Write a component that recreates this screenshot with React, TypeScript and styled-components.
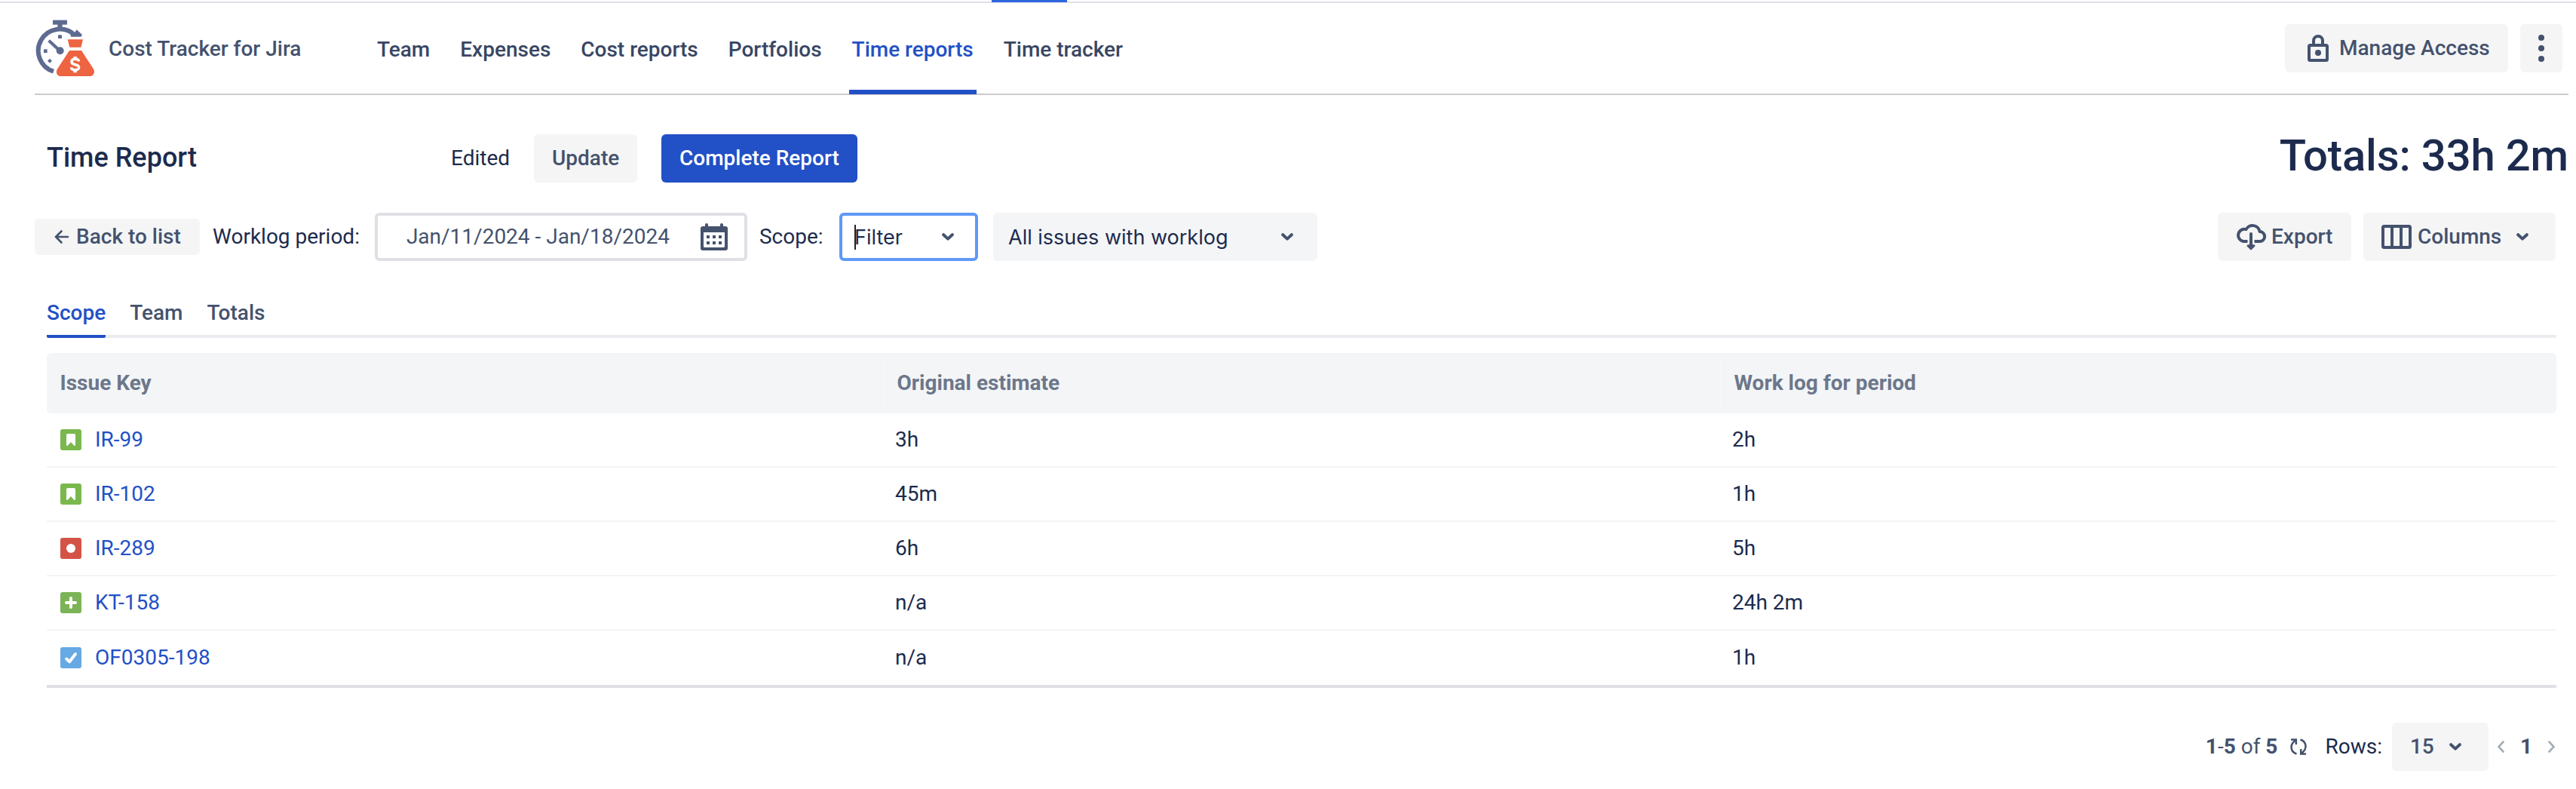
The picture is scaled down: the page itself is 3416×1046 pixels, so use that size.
import React from "react";
import styled, { createGlobalStyle, css } from "styled-components";

const color = {
  ink: "#1c2b4d",
  slate: "#44526d",
  navText: "#384663",
  muted: "#6c778b",
  blue: "#2250c6",
  buttonBg: "#f5f5f6",
  fieldBg: "#f4f5f7",
  line: "#ebecf0",
  border: "#dfe0e5",
};

const GlobalStyle = createGlobalStyle`
  *, *::before, *::after { box-sizing: border-box; }
  body { margin: 0; background: #fff; }
`;

const Page = styled.div`
  display: flex;
  flex-direction: column;
  width: 3416px;
  height: 1046px;
  overflow: hidden;
  background: #fff;
  color: ${color.ink};
  font-family: Roboto, "Liberation Sans", sans-serif;
  font-size: 28px;
  line-height: 40px;
  white-space: nowrap;
  svg { display: block; flex: none; }
`;

const HostBar = styled.div`
  height: 4px;
  flex: none;
  padding-left: 1315px;
  background: linear-gradient(#fff 0 2px, #dfe0e8 2px 4px);
`;

const HostTab = styled.div`
  width: 100px;
  height: 3px;
  background: #2e66e0;
`;

const Header = styled.header`
  display: flex;
  flex: none;
  height: 122px;
  margin: 0 10px 0 46px;
  padding-right: 8px;
  border-bottom: 2px solid #cbcbcc;
`;

const Brand = styled.div`
  display: flex;
  align-items: center;
  width: 450px;
  padding-top: 2px;
  color: ${color.slate};
  font-weight: 500;
  svg { margin: -4px 18px 0 0; }
`;

const Nav = styled.nav`
  display: flex;
  flex: 1;
  gap: 32px;
`;

const NavLink = styled.a<{ $active?: boolean }>`
  display: flex;
  align-items: center;
  height: 121px;
  padding: 9px 4px 0;
  border-bottom: 6px solid ${(p) => (p.$active ? color.blue : "transparent")};
  border-radius: 3px 3px 0 0;
  color: ${(p) => (p.$active ? color.blue : color.navText)};
  font-weight: 500;
`;

const HeaderActions = styled.div`
  display: flex;
  gap: 16px;
  padding-top: 28px;
`;

const Button = styled.button<{ $width: number; $primary?: boolean; $pad?: number; $short?: boolean }>`
  display: flex;
  flex: none;
  align-items: center;
  width: ${(p) => p.$width}px;
  height: ${(p) => (p.$short ? 48 : 64)}px;
  margin: 0;
  padding: 0 0 0 ${(p) => p.$pad ?? 24}px;
  border: 0;
  border-radius: 6px;
  background: ${(p) => (p.$primary ? color.blue : color.buttonBg)};
  color: ${(p) => (p.$primary ? "#fff" : color.slate)};
  font: inherit;
  font-weight: 500;
`;

const Label = styled.span<{ $left?: number; $right?: number }>`
  margin-left: ${(p) => p.$left ?? 0}px;
  margin-right: ${(p) => p.$right ?? 0}px;
`;

const TitleRow = styled.section`
  display: flex;
  flex: none;
  align-items: center;
  height: 64px;
  margin: 52px 10px 0 62px;
`;

const Title = styled.h1`
  width: 536px;
  margin: 0 0 2px;
  font-size: 36px;
  font-weight: 500;
`;

const Status = styled.span`
  width: 110px;
`;

const TitleActions = styled.div`
  display: flex;
  flex: 1;
  gap: 32px;
`;

const GrandTotal = styled.div`
  margin-bottom: 8px;
  font-size: 58px;
  line-height: 64px;
  font-weight: 500;
  letter-spacing: -0.15px;
`;

const Toolbar = styled.section`
  display: flex;
  flex: none;
  align-items: center;
  height: 64px;
  margin: 40px 27px 0 46px;
`;

const fieldBox = css`
  display: flex;
  align-items: center;
  height: 64px;
  border-radius: 6px;
`;

const DateField = styled.div`
  ${fieldBox}
  width: 494px;
  margin: 0 16px 0 20px;
  padding-left: 38px;
  border: 4px solid ${color.border};
  color: ${color.slate};
  svg { margin-left: 41px; }
`;

const Select = styled.div<{ $width: number; $focused?: boolean }>`
  ${fieldBox}
  justify-content: space-between;
  width: ${(p) => p.$width}px;
  margin-left: 20px;
  padding: 0 28px 0 16px;
  border: 4px solid ${(p) => (p.$focused ? "#5f99f7" : color.fieldBg)};
  background: ${(p) => (p.$focused ? "#fff" : color.fieldBg)};
  font-family: Inter, Roboto, sans-serif;
  font-size: 27px;
`;

const SelectValue = styled.span`
  display: flex;
  align-items: center;
  padding-top: 1px;
`;

const Caret = styled.i`
  width: 2px;
  height: 33px;
  margin-right: -2px;
  background: #222;
`;

const ToolbarEnd = styled.div`
  display: flex;
  gap: 16px;
  margin-left: auto;
`;

const Tabs = styled.div`
  display: flex;
  flex: none;
  gap: 32px;
  height: 48px;
  margin: 54px 26px 0 62px;
  border-bottom: 4px solid ${color.line};
`;

const Tab = styled.div<{ $active?: boolean }>`
  height: 48px;
  line-height: 29px;
  border-bottom: 4px solid ${(p) => (p.$active ? color.blue : "transparent")};
  border-radius: 2px;
  color: ${(p) => (p.$active ? color.blue : color.slate)};
  font-weight: 500;
`;

const Table = styled.div`
  flex: none;
  margin: 20px 26px 0 62px;
  border-bottom: 4px solid ${color.border};
`;

const gridRow = css`
  display: grid;
  grid-template-columns: 1110px 1110px 1fr;
  align-items: center;
`;

const HeadRow = styled.div`
  ${gridRow}
  height: 80px;
  border-radius: 6px;
  background: ${color.fieldBg};
  color: ${color.muted};
  font-weight: 700;
`;

const HeadCell = styled.div`
  padding-left: 17.5px;
  line-height: 80px;
  & + & { box-shadow: -1px 0 0 #f7f8fa; }
`;

const Row = styled.div`
  ${gridRow}
  height: 72px;
  border-bottom: 2px solid #f3f4f6;
  &:last-child { border-bottom: 0; }
`;

const Cell = styled.div`
  padding-left: 15px;
`;

const KeyCell = styled.div`
  display: flex;
  align-items: center;
  gap: 18px;
  padding-left: 18px;
  color: ${color.blue};
`;

const Pagination = styled.footer`
  display: flex;
  flex: none;
  align-items: center;
  justify-content: flex-end;
  height: 64px;
  margin: 46px 28px 0 0;
`;

const Range = styled.span`
  margin-right: 17px;
  color: ${color.slate};
  b { font-weight: 700; }
`;

const RowsLabel = styled.span`
  margin: 0 13px 0 24px;
`;

const PageNumber = styled.b`
  margin: 0 21px;
  color: ${color.slate};
  font-weight: 700;
`;

const Logo = () => (
  <svg width="80" height="78" viewBox="48 42 240 234">
    <g fill="#5d6b90">
      <rect x="120" y="50" width="57" height="18" />
      <rect x="139" y="66" width="19" height="18" />
      <rect x="141" y="109" width="15" height="14" />
      <rect x="84" y="166" width="14" height="14" />
      <path d="M108 203l9 9-9 9-9-9z" />
      <circle cx="149" cy="172" r="15" />
      <path d="M215 88l22 20-5 8h-40l-2-12h14z" />
    </g>
    <path d="M123 254A86 86 0 1 1 206 108" fill="none" stroke="#5d6b90" strokeWidth="18" />
    <path d="M104 131l44 41" stroke="#5d6b90" strokeWidth="12" />
    <g fill="#ee6340">
      <path d="M179 127h61l-8 31h-45z" />
      <path d="M186 171h48l47 72q7 11 2 20-5 10-17 10H153q-13 0-17-10-4-9 3-20z" />
    </g>
    <path d="M224 214q-2-9-15-9-14 0-14 10 0 9 14 12 15 3 15 11 0 10-15 10-14 0-16-10" fill="none" stroke="#fff" strokeWidth="10.5" />
    <path d="M209 195v10M209 248v11" stroke="#fff" strokeWidth="13" />
  </svg>
);

const LockIcon = () => (
  <svg width="28" height="36" viewBox="0 0 28 36" fill="none" stroke={color.slate} strokeWidth="4">
    <rect x="2" y="14" width="24" height="20" rx="1.5" />
    <path d="M8 14V8a6 6 0 0 1 12 0v6" />
    <circle cx="14" cy="24" r="4" fill={color.slate} stroke="none" />
  </svg>
);

const MoreIcon = () => (
  <svg width="8" height="36" viewBox="0 0 8 36" fill={color.slate}>
    <circle cx="4" cy="4" r="4" />
    <circle cx="4" cy="18" r="4" />
    <circle cx="4" cy="32" r="4" />
  </svg>
);

const BackIcon = () => (
  <svg width="20" height="18" viewBox="0 0 20 18" fill="none" stroke={color.slate} strokeWidth="2.6" strokeLinecap="round" strokeLinejoin="round">
    <path d="M9.5 1.5L2 9l7.5 7.5M2 9h16" />
  </svg>
);

const CalendarIcon = () => (
  <svg width="36" height="36" viewBox="0 0 36 36" fill={color.slate}>
    <path fillRule="evenodd" d="M3 4h30a3 3 0 0 1 3 3v26a3 3 0 0 1-3 3H3a3 3 0 0 1-3-3V7a3 3 0 0 1 3-3zm1 8v18.5a1.5 1.5 0 0 0 1.5 1.5h25a1.5 1.5 0 0 0 1.5-1.5V12z" />
    <rect x="6" width="4" height="8" rx="2" />
    <rect x="26" width="4" height="8" rx="2" />
    <path d="M8 16h4v4H8zM16 16h4v4h-4zM24 16h4v4h-4zM8 24h4v4H8zM16 24h4v4h-4zM24 24h4v4h-4z" />
  </svg>
);

const ChevronIcon = () => (
  <svg width="16" height="10" viewBox="0 0 16 10" fill="none" stroke={color.slate} strokeWidth="4" strokeLinecap="round" strokeLinejoin="round">
    <path d="M2.2 2.2L8 7.6l5.8-5.4" />
  </svg>
);

const ExportIcon = () => (
  <svg width="40" height="36" viewBox="0 0 40 36" fill="none" stroke={color.slate} strokeWidth="4">
    <path d="M15.5 24H10.2a8.1 8.1 0 1 1 3.3-15.8A9.6 9.6 0 0 1 31.5 11a6.5 6.5 0 0 1 .2 13H24.5" strokeLinejoin="round" />
    <path d="M20 14v18" strokeLinecap="round" />
    <path d="M16 29.8h8l-4 4z" fill={color.slate} strokeWidth="3" strokeLinejoin="round" />
  </svg>
);

const ColumnsIcon = () => (
  <svg width="40" height="32" viewBox="0 0 40 32" fill="none" stroke={color.slate} strokeWidth="4">
    <rect x="2" y="2" width="36" height="28" rx="1.5" />
    <path d="M14 2v28M26 2v28" />
  </svg>
);

const RefreshIcon = () => (
  <svg width="22" height="22" viewBox="0 0 22 22" fill="none" stroke={color.slate} strokeWidth="2.5">
    <path d="M8.5 20.5C4 19 1.5 15.5 1.5 11.5 1.5 7.5 4 4.5 7.5 2.2M1 1.6h6.8V8" />
    <path d="M13.5 1.5C18 3 20.5 6.5 20.5 10.5c0 4-2.5 7-6 9.3M21 20.4h-6.8V14" />
  </svg>
);

const PageArrow = ({ next }: { next?: boolean }) => (
  <svg width="9" height="16" viewBox="0 0 9 16" fill="none" stroke="#a5adba" strokeWidth="2.6" strokeLinecap="round">
    <path d={next ? "M1.5 1.5L7.5 8l-6 6.5" : "M7.5 1.5L1.5 8l6 6.5"} />
  </svg>
);

type Kind = "story" | "bug" | "feature" | "task";

const kindColor: Record<Kind, string> = {
  story: "#7ab84e",
  bug: "#d35445",
  feature: "#7bb356",
  task: "#66a9e3",
};

const KindIcon = ({ kind }: { kind: Kind }) => (
  <svg width="28" height="28" viewBox="0 0 28 28" fill="none" stroke="#fff" strokeLinecap="round" strokeLinejoin="round">
    <rect width="28" height="28" rx="3" fill={kindColor[kind]} stroke="none" />
    {kind === "story" && <path d="M8 8q0-2 2-2h8q2 0 2 2v13.5q-1 .8-2 0l-4-4.5-4 4.5q-1 .8-2 0z" fill="#fff" stroke="none" />}
    {kind === "bug" && <circle cx="14" cy="14" r="6" fill="#fff" stroke="none" />}
    {kind === "feature" && <path d="M14 8v12M8 14h12" strokeWidth="4" />}
    {kind === "task" && <path d="M8.2 15.5l4 3.8L20 9" strokeWidth="4" />}
  </svg>
);

const navItems = ["Team", "Expenses", "Cost reports", "Portfolios", "Time reports", "Time tracker"];

const issues: { kind: Kind; key: string; estimate: string; logged: string }[] = [
  { kind: "story", key: "IR-99", estimate: "3h", logged: "2h" },
  { kind: "story", key: "IR-102", estimate: "45m", logged: "1h" },
  { kind: "bug", key: "IR-289", estimate: "6h", logged: "5h" },
  { kind: "feature", key: "KT-158", estimate: "n/a", logged: "24h 2m" },
  { kind: "task", key: "OF0305-198", estimate: "n/a", logged: "1h" },
];

export default function App() {
  return (
    <Page>
      <GlobalStyle />
      <HostBar>
        <HostTab />
      </HostBar>

      <Header>
        <Brand>
          <Logo />
          Cost Tracker for Jira
        </Brand>
        <Nav>
          {navItems.map((item) => (
            <NavLink key={item} $active={item === "Time reports"}>
              {item}
            </NavLink>
          ))}
        </Nav>
        <HeaderActions>
          <Button $width={296} $pad={30}>
            <LockIcon />
            <Label $left={14}>Manage Access</Label>
          </Button>
          <Button $width={56} $pad={24}>
            <MoreIcon />
          </Button>
        </HeaderActions>
      </Header>

      <TitleRow>
        <Title>Time Report</Title>
        <Status>Edited</Status>
        <TitleActions>
          <Button $width={137}>Update</Button>
          <Button $width={260} $primary>
            Complete Report
          </Button>
        </TitleActions>
        <GrandTotal>Totals: 33h 2m</GrandTotal>
      </TitleRow>

      <Toolbar>
        <Button $width={219} $pad={26} $short>
          <BackIcon />
          <Label $left={9}>Back to list</Label>
        </Button>
        <Label $left={17}>Worklog period:</Label>
        <DateField>
          Jan/11/2024 - Jan/18/2024
          <CalendarIcon />
        </DateField>
        <Label $right={1.5}>Scope:</Label>
        <Select $width={184} $focused>
          <SelectValue>
            <Caret />
            Filter
          </SelectValue>
          <ChevronIcon />
        </Select>
        <Select $width={430}>
          <SelectValue>All issues with worklog</SelectValue>
          <ChevronIcon />
        </Select>
        <ToolbarEnd>
          <Button $width={177}>
            <ExportIcon />
            <Label $left={7}>Export</Label>
          </Button>
          <Button $width={255}>
            <ColumnsIcon />
            <Label $left={8} $right={20}>
              Columns
            </Label>
            <ChevronIcon />
          </Button>
        </ToolbarEnd>
      </Toolbar>

      <Tabs>
        <Tab $active>Scope</Tab>
        <Tab>Team</Tab>
        <Tab>Totals</Tab>
      </Tabs>

      <Table>
        <HeadRow>
          <HeadCell>Issue Key</HeadCell>
          <HeadCell>Original estimate</HeadCell>
          <HeadCell>Work log for period</HeadCell>
        </HeadRow>
        {issues.map((issue) => (
          <Row key={issue.key}>
            <KeyCell>
              <KindIcon kind={issue.kind} />
              {issue.key}
            </KeyCell>
            <Cell>{issue.estimate}</Cell>
            <Cell>{issue.logged}</Cell>
          </Row>
        ))}
      </Table>

      <Pagination>
        <Range>
          <b>1</b>-<b>5</b> of <b>5</b>
        </Range>
        <RefreshIcon />
        <RowsLabel>Rows:</RowsLabel>
        <Button $width={128}>
          <Label $right={20}>15</Label>
          <ChevronIcon />
        </Button>
        <Label $left={12}>
          <PageArrow />
        </Label>
        <PageNumber>1</PageNumber>
        <PageArrow next />
      </Pagination>
    </Page>
  );
}
